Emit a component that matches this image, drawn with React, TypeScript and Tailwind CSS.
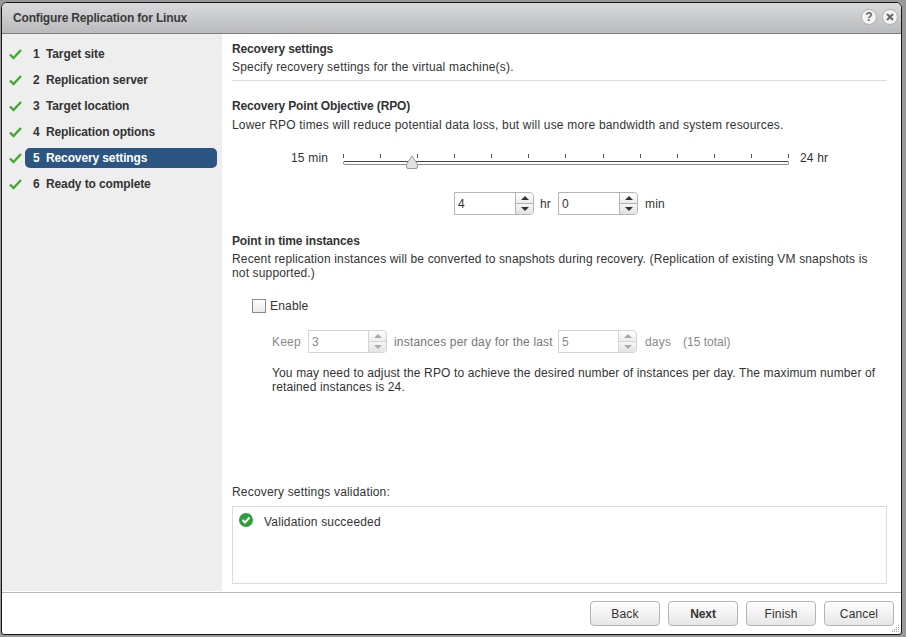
import React from "react";

const steps = [
  "Target site",
  "Replication server",
  "Target location",
  "Replication options",
  "Recovery settings",
  "Ready to complete",
];

const Check = () => (
  <svg width="14" height="12" viewBox="0 0 14 12" className="shrink-0">
    <path d="M1 6.5 L4.5 10 L12 2" fill="none" stroke="#43a82c" strokeWidth="2.4" />
  </svg>
);

const Spinner = ({ value, width, disabled }: { value: string; width: string; disabled?: boolean }) => (
  <div className={`flex h-[23px] ${width} border rounded-r-[4px] ${disabled ? "border-[#d4d4d4] text-[#888888]" : "border-[#b5b5b5] text-[#333333]"}`}>
    <div className="flex-1 pl-[3px] leading-[23px]">{value}</div>
    <div className={`w-[18px] flex flex-col border-l ${disabled ? "border-[#d4d4d4]" : "border-[#b5b5b5]"}`}>
      <div className={`flex-1 flex items-center justify-center rounded-tr-[4px] bg-gradient-to-b from-white to-[#ececec] border-b ${disabled ? "border-[#d4d4d4]" : "border-[#b5b5b5]"}`}>
        <div className={`w-0 h-0 border-x-[4px] border-x-transparent border-b-[4px] ${disabled ? "border-b-[#aaaaaa]" : "border-b-[#333333]"}`} />
      </div>
      <div className="flex-1 flex items-center justify-center rounded-br-[4px] bg-gradient-to-b from-[#f6f6f6] to-[#e2e2e2]">
        <div className={`w-0 h-0 border-x-[4px] border-x-transparent border-t-[4px] ${disabled ? "border-t-[#aaaaaa]" : "border-t-[#333333]"}`} />
      </div>
    </div>
  </div>
);

const FooterButton = ({ label, bold }: { label: string; bold?: boolean }) => (
  <button className={`w-[70px] h-[25px] rounded-[4px] border border-[#b4b4b4] bg-gradient-to-b from-white to-[#e6e6e6] text-[#333333] ${bold ? "font-bold tracking-[-0.1px]" : ""}`}>
    {label}
  </button>
);

export default function App() {
  return (
    <div className="w-[906px] h-[637px] bg-[#999999] pt-[2px] pl-[1px] pr-[4px] pb-[2px] overflow-hidden font-['Liberation_Sans',Arial,sans-serif] text-[12px] tracking-[0.18px] text-[#333333]">
      <div className="relative h-full flex flex-col bg-white border border-[#161616] rounded-t-[6px] rounded-b-[3px] overflow-hidden">
        {/* Title bar */}
        <div className="h-[31px] shrink-0 flex items-center pl-[11px] pr-[3px] bg-gradient-to-b from-[#d9dadc] to-[#b9babc] border-b border-[#7e7e7e]">
          <span className="font-bold tracking-[-0.17px] text-[#3a3a3a] flex-1">Configure Replication for Linux</span>
          <div className="flex gap-[5px] mb-[2px]">
            <div className="w-[16px] h-[16px] rounded-full bg-[#f4f4f4] border border-[#b0b0b0] flex items-center justify-center font-bold text-[#666666] text-[12px]">?</div>
            <div className="w-[16px] h-[16px] rounded-full bg-[#f4f4f4] border border-[#b0b0b0] flex items-center justify-center">
              <svg width="8" height="8" viewBox="0 0 8 8">
                <path d="M1 1 L7 7 M7 1 L1 7" stroke="#666666" strokeWidth="2" />
              </svg>
            </div>
          </div>
        </div>

        <div className="flex-1 flex min-h-0">
          {/* Steps */}
          <div className="w-[220px] shrink-0 bg-[#eeeeee] pt-[10px] mb-[1px] flex flex-col gap-[6px]">
            {steps.map((s, i) => (
              <div key={s} className="flex items-center h-[20px] pl-[7px]">
                <Check />
                <div className={`ml-[2px] w-[192px] h-[20px] flex items-center pl-[8px] rounded-[5px] font-bold tracking-[-0.12px] ${i === 4 ? "bg-[#2c5581] text-white" : "text-[#333333]"}`}>
                  <span className="w-[13px]">{i + 1}</span>
                  {s}
                </div>
              </div>
            ))}
          </div>

          {/* Recovery settings */}
          <div className="flex-1 pl-[10px] pr-[14px] pt-[6px] flex flex-col min-w-0">
            <div className="font-bold tracking-[-0.13px] leading-[18px]">Recovery settings</div>
            <div className="leading-[18px] mb-[4px]">Specify recovery settings for the virtual machine(s).</div>
            <div className="border-t border-[#dcdcdc] mb-[16px]" />

            <div className="font-bold tracking-[-0.13px] leading-[18px]">Recovery Point Objective (RPO)</div>
            <div className="leading-[20px] tracking-[0.19px]">Lower RPO times will reduce potential data loss, but will use more bandwidth and system resources.</div>

            <div className="flex mt-[14px] h-[26px] pl-[59px]">
              <span className="w-[52px] leading-[19px]">15 min</span>
              <div className="relative w-[446px] pt-[5px]">
                <div className="flex justify-between">
                  {Array.from({ length: 13 }).map((_, i) => (
                    <div key={i} className="w-[1px] h-[4px] bg-[#555555]" />
                  ))}
                </div>
                <div className="mt-[3px] h-[4px] border border-[#8c8c8c] border-t-[#444444] rounded-full bg-white" />
                <svg width="14" height="15" viewBox="0 0 14 15" className="absolute left-[62px] top-[6px]">
                  <path d="M7 1 L12.5 9 V12 Q12.5 13.5 11 13.5 H3 Q1.5 13.5 1.5 12 V9 Z" fill="#e2e2e2" stroke="#9a9a9a" />
                </svg>
              </div>
              <span className="ml-[11px] leading-[19px]">24 hr</span>
            </div>

            <div className="flex items-center mt-[17px] pl-[222px]">
              <Spinner value="4" width="w-[80px]" />
              <span className="ml-[6px] w-[18px]">hr</span>
              <Spinner value="0" width="w-[80px]" />
              <span className="ml-[7px]">min</span>
            </div>

            <div className="font-bold tracking-[-0.13px] leading-[18px] mt-[17px]">Point in time instances</div>
            <div className="leading-[14px] mt-[2px] tracking-[0.15px]">
              Recent replication instances will be converted to snapshots during recovery. (Replication of existing VM snapshots is not supported.)
            </div>

            <div className="flex items-center mt-[17px] pl-[20px]">
              <div className="w-[14px] h-[14px] border border-[#8a8a8a] bg-gradient-to-b from-white to-[#e8e8e8]" />
              <span className="ml-[4px]">Enable</span>
            </div>

            <div className="flex items-center mt-[15px] pl-[40px] text-[#888888]">
              <span className="w-[36px]">Keep</span>
              <Spinner value="3" width="w-[79px]" disabled />
              <span className="ml-[7px] w-[164px] whitespace-nowrap text-[#777777]">instances per day for the last</span>
              <Spinner value="5" width="w-[79px]" disabled />
              <span className="ml-[8px]">days</span>
              <span className="ml-[12px] tracking-normal">(15 total)</span>
            </div>

            <div className="pl-[40px] mt-[13px] leading-[14px] tracking-[0.14px]">
              You may need to adjust the RPO to achieve the desired number of instances per day. The maximum number of retained instances is 24.
            </div>

            <div className="mt-auto leading-[14px]">Recovery settings validation:</div>
            <div className="h-[78px] mt-[7px] mb-[8px] border border-[#dcdcdc] flex items-start pl-[6px] pt-[6px]">
              <svg width="14" height="14" viewBox="0 0 14 14" className="shrink-0">
                <circle cx="7" cy="7" r="7" fill="#2e9e3a" />
                <path d="M3.5 7 L6 9.5 L10.5 4.5" fill="none" stroke="white" strokeWidth="2" />
              </svg>
              <span className="ml-[11px] leading-[18px]">Validation succeeded</span>
            </div>
          </div>
        </div>

        {/* Footer */}
        <div className="h-[42px] shrink-0 border-t border-[#b8b8b8] flex items-start justify-end gap-[8px] pt-[8px] pr-[7px]">
          <FooterButton label="Back" />
          <FooterButton label="Next" bold />
          <FooterButton label="Finish" />
          <FooterButton label="Cancel" />
        </div>

        {/* resize grip */}
        <svg width="9" height="9" viewBox="0 0 9 9" className="absolute right-[1px] bottom-[1px]">
          <path d="M7 1h1v1H7zM5 3h1v1H5zM7 3h1v1H7zM3 5h1v1H3zM5 5h1v1H5zM7 5h1v1H7zM1 7h1v1H1zM3 7h1v1H3zM5 7h1v1H5zM7 7h1v1H7z" fill="#9a9a9a" />
        </svg>
      </div>
    </div>
  );
}
